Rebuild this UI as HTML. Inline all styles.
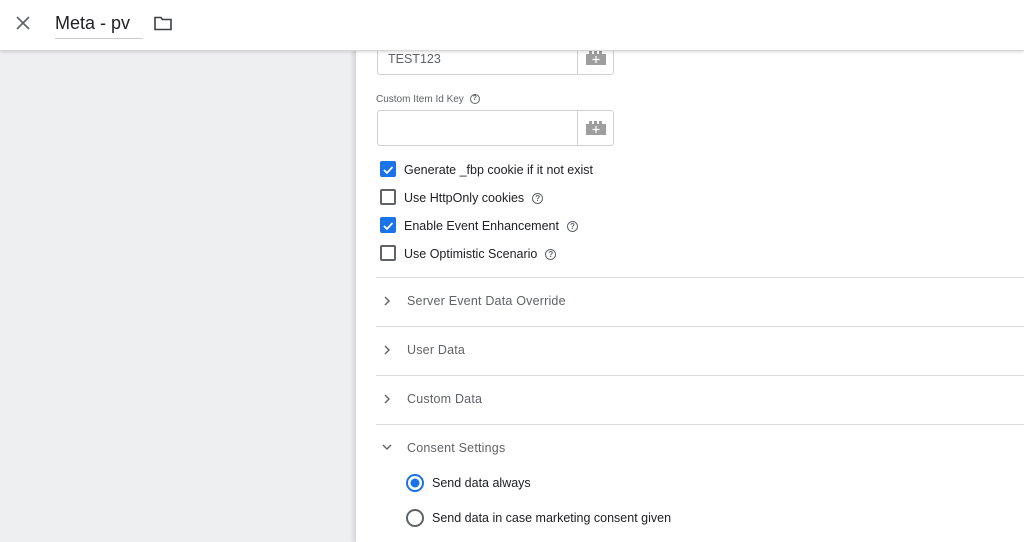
<!DOCTYPE html><html><head><style>
body{margin:0;width:1024px;height:542px;overflow:hidden;font-family:"Liberation Sans",Arial,sans-serif;background:#eeeff1;position:relative}
.a{position:absolute}
.hdr{left:0;top:0;width:1024px;height:50px;background:#fff;border-bottom:1px solid #d6d6d6;box-shadow:0 1px 3px rgba(0,0,0,.15);z-index:3}
.panel{left:356px;top:0;width:668px;height:542px;background:#fff;box-shadow:-2px 0 5px rgba(0,0,0,.15)}
.inp{left:377px;width:235px;border:1px solid #d0d0d0;border-radius:3px;background:#fff}
.btn{position:absolute;right:0;top:0;bottom:0;width:35px;border-left:1px solid #d0d0d0}
.cb{left:380px;width:12px;height:12px;border:2px solid #5f6368;border-radius:2px}
.cb.on{background:#1a73e8;border-color:#1a73e8}
.t{font-size:12.5px;color:#202124}
.q{display:inline-block;width:9px;height:9px;border:1.3px solid #5f6368;border-radius:50%;font-size:8px;line-height:9px;text-align:center;color:#5f6368;vertical-align:middle;margin-left:8px;font-weight:bold}
.sep{left:376px;width:648px;height:1px;background:#dadce0}
.sec{left:407px;font-size:12.5px;color:#5f6368;letter-spacing:.2px}
</style></head><body>
<div class="a hdr">
<svg class="a" style="left:16px;top:16px" width="14" height="14"><path d="M1 1L13 13M13 1L1 13" stroke="#5f6368" stroke-width="1.6"/></svg>
<div class="a" style="left:55px;top:13px;font-size:18px;color:#202124">Meta - pv</div>
<div class="a" style="left:55px;top:38px;width:88px;height:1px;background:#ccc"></div>
<svg class="a" style="left:154px;top:16px" width="18" height="15"><path d="M1 1.5h6l1.5 2h8.5v10h-16z" fill="none" stroke="#3c4043" stroke-width="1.6"/></svg>
</div>
<div class="a panel"></div>
<div class="a inp" style="top:40px;height:33px"><div class="a t" style="left:10px;top:11px;color:#5f6368">TEST123</div><div class="btn"><svg class="a" style="left:8px;top:10px" width="20" height="14"><path d="M0 3h3v-3h3v3h2v-3h3v3h2v-3h3v3h4v11h-20z" fill="#9e9e9e"/><path d="M10 5v7M6.5 8.5h7" stroke="#fff" stroke-width="1.2"/></svg></div></div>
<div class="a" style="left:376px;top:94px;font-size:10px;color:#5f6368">Custom Item Id Key<span class="q" style="width:8px;height:8px;line-height:8px;font-size:7px;margin-left:6px">?</span></div>
<div class="a inp" style="top:110px;height:34px"><div class="btn"><svg class="a" style="left:8px;top:10px" width="20" height="14"><path d="M0 3h3v-3h3v3h2v-3h3v3h2v-3h3v3h4v11h-20z" fill="#9e9e9e"/><path d="M10 5v7M6.5 8.5h7" stroke="#fff" stroke-width="1.2"/></svg></div></div>
<div class="a cb on" style="top:161px"><svg width="12" height="12"><path d="M2 6l3 3 5.5-6" stroke="#fff" stroke-width="1.8" fill="none"/></svg></div>
<div class="a t" style="left:404px;top:163px">Generate _fbp cookie if it not exist</div>
<div class="a cb" style="top:189px"></div>
<div class="a t" style="left:404px;top:191px">Use HttpOnly cookies<span class="q">?</span></div>
<div class="a cb on" style="top:217px"><svg width="12" height="12"><path d="M2 6l3 3 5.5-6" stroke="#fff" stroke-width="1.8" fill="none"/></svg></div>
<div class="a t" style="left:404px;top:219px">Enable Event Enhancement<span class="q">?</span></div>
<div class="a cb" style="top:245px"></div>
<div class="a t" style="left:404px;top:247px">Use Optimistic Scenario<span class="q">?</span></div>
<div class="a sep" style="top:277px"></div>
<svg class="a" style="left:384px;top:296px" width="7" height="10"><path d="M1 1l4 4-4 4" stroke="#5f6368" stroke-width="1.4" fill="none"/></svg><div class="a sec" style="top:294px">Server Event Data Override</div>
<div class="a sep" style="top:326px"></div>
<svg class="a" style="left:384px;top:345px" width="7" height="10"><path d="M1 1l4 4-4 4" stroke="#5f6368" stroke-width="1.4" fill="none"/></svg><div class="a sec" style="top:343px">User Data</div>
<div class="a sep" style="top:375px"></div>
<svg class="a" style="left:384px;top:394px" width="7" height="10"><path d="M1 1l4 4-4 4" stroke="#5f6368" stroke-width="1.4" fill="none"/></svg><div class="a sec" style="top:392px">Custom Data</div>
<div class="a sep" style="top:424px"></div>
<svg class="a" style="left:382px;top:444px" width="10" height="7"><path d="M1 1l4 4 4-4" stroke="#5f6368" stroke-width="1.4" fill="none"/></svg>
<div class="a sec" style="top:441px">Consent Settings</div>
<svg class="a" style="left:405px;top:473px" width="20" height="20"><circle cx="10" cy="10" r="8" fill="none" stroke="#1a73e8" stroke-width="2"/><circle cx="10" cy="10" r="4.5" fill="#1a73e8"/></svg>
<div class="a t" style="left:432px;top:476px">Send data always</div>
<svg class="a" style="left:405px;top:508px" width="20" height="20"><circle cx="10" cy="10" r="8" fill="none" stroke="#5f6368" stroke-width="2"/></svg>
<div class="a t" style="left:432px;top:511px">Send data in case marketing consent given</div>
</body></html>
